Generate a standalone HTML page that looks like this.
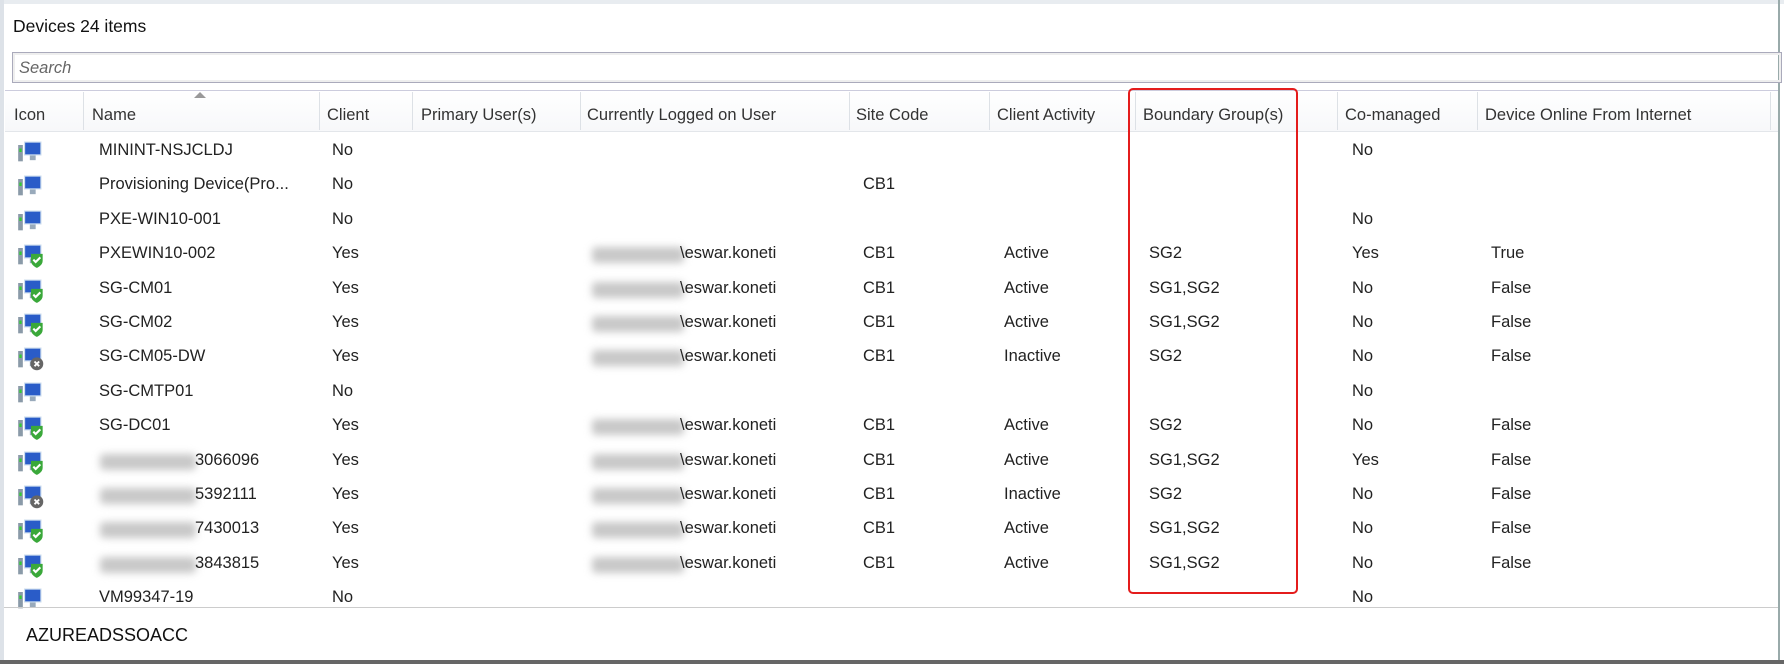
<!DOCTYPE html><html><head><style>
*{margin:0;padding:0;box-sizing:border-box}
body{width:1784px;height:664px;background:#fff;font-family:"Liberation Sans",sans-serif;color:#222;position:relative;overflow:hidden}
.a{position:absolute;white-space:nowrap}
.h{font-size:16.5px;color:#333;top:106px}
.r{font-size:16.5px;color:#222}
.div{position:absolute;top:92px;width:1px;height:38px;background:#dde1e6}
.blur{position:absolute;height:16px;background:#c8c8c8;filter:blur(4px);border-radius:4px}
</style></head><body>
<div class="a" style="left:0;top:0;width:1784px;height:4px;background:#e8ecf0"></div>
<div class="a" style="left:0;top:0;width:4px;height:664px;background:#dde2e8"></div>
<div class="a" style="left:1778px;top:0;width:2px;height:664px;background:#9aa"></div>
<div class="a" style="left:0;top:660px;width:1784px;height:4px;background:#666"></div>
<div class="a" style="left:13px;top:16px;font-size:17.5px;color:#111">Devices 24 items</div>
<div class="a" style="left:12px;top:52px;width:1770px;height:31px;border:1px solid #aab;box-shadow:inset 0 0 0 2px #eee"></div>
<div class="a" style="left:19px;top:59px;font-size:16.5px;font-style:italic;color:#666">Search</div>
<div class="a" style="left:5px;top:90px;width:1773px;height:42px;background:linear-gradient(#fff,#f7f8fa);border-top:1px solid #ccd;border-bottom:1px solid #e3e6ea"></div>
<div class="a" style="left:194px;top:92px;width:0;height:0;border-left:6px solid transparent;border-right:6px solid transparent;border-bottom:6px solid #999"></div>
<div class="div" style="left:83px"></div><div class="div" style="left:319px"></div><div class="div" style="left:412px"></div><div class="div" style="left:580px"></div><div class="div" style="left:849px"></div><div class="div" style="left:989px"></div><div class="div" style="left:1135px"></div><div class="div" style="left:1337px"></div><div class="div" style="left:1477px"></div><div class="div" style="left:1770px"></div>
<div class="a h" style="left:14px">Icon</div><div class="a h" style="left:92px">Name</div><div class="a h" style="left:327px">Client</div><div class="a h" style="left:421px">Primary User(s)</div><div class="a h" style="left:587px">Currently Logged on User</div><div class="a h" style="left:856px">Site Code</div><div class="a h" style="left:997px">Client Activity</div><div class="a h" style="left:1143px">Boundary Group(s)</div><div class="a h" style="left:1345px">Co-managed</div><div class="a h" style="left:1485px">Device Online From Internet</div>
<div id="rows"></div>
<div class="a" style="left:4px;top:607px;width:1774px;height:1px;background:#ccc"></div>
<div class="a" style="left:26px;top:625px;font-size:18px;color:#111">AZUREADSSOACC</div>
<div class="a" style="left:1128px;top:88px;width:170px;height:506px;border:2px solid #e41c1c;border-radius:5px"></div>
<script>
var d=[["MININT-NSJCLDJ","No","","","","","No","",0],["Provisioning Device(Pro...","No","","CB1","","","","",0],["PXE-WIN10-001","No","","","","","No","",0],["PXEWIN10-002","Yes","u","CB1","Active","SG2","Yes","True",1],["SG-CM01","Yes","u","CB1","Active","SG1,SG2","No","False",1],["SG-CM02","Yes","u","CB1","Active","SG1,SG2","No","False",1],["SG-CM05-DW","Yes","u","CB1","Inactive","SG2","No","False",2],["SG-CMTP01","No","","","","","No","",0],["SG-DC01","Yes","u","CB1","Active","SG2","No","False",1],["*3066096","Yes","u","CB1","Active","SG1,SG2","Yes","False",1],["*5392111","Yes","u","CB1","Inactive","SG2","No","False",2],["*7430013","Yes","u","CB1","Active","SG1,SG2","No","False",1],["*3843815","Yes","u","CB1","Active","SG1,SG2","No","False",1],["VM99347-19","No","","","","","No","",0]];
var h="";d.forEach(function(r,i){var t=141+i*34.4;
var ic='<svg class="a" style="left:17px;top:'+(t-3)+'px" width="28" height="28" viewBox="0 0 24 24"><rect x="1" y="6" width="4" height="14" fill="#8a9aa8"/><rect x="2" y="9" width="2" height="3" fill="#3c3"/><rect x="6" y="3" width="15" height="12" fill="#cde"/><rect x="7" y="4" width="13" height="10" fill="#2a5cc8"/><rect x="11" y="15" width="5" height="4" fill="#9ab"/>'+(r[8]==1?'<path d="M12 11h10v6c0 4-5 6-5 6s-5-2-5-6z" fill="#3aa83a"/><path d="M14 16l2 2 4-4" stroke="#fff" stroke-width="1.8" fill="none"/>':r[8]==2?'<circle cx="17" cy="17" r="5.5" fill="#666"/><path d="M15 15l4 4M19 15l-4 4" stroke="#fff" stroke-width="1.6"/>':'')+'</svg>';
h+=ic;var n=r[0];if(n[0]=="*"){h+='<div class="blur" style="left:100px;top:'+(t+3)+'px;width:96px"></div>';h+='<div class="a r" style="left:195px;top:'+t+'px">'+n.slice(1)+'</div>'}else h+='<div class="a r" style="left:99px;top:'+t+'px">'+n+'</div>';
h+='<div class="a r" style="left:332px;top:'+t+'px">'+r[1]+'</div>';
if(r[2]){h+='<div class="blur" style="left:592px;top:'+(t+3)+'px;width:92px"></div><div class="a r" style="left:680px;top:'+t+'px">\\eswar.koneti</div>'}
h+='<div class="a r" style="left:863px;top:'+t+'px">'+r[3]+'</div><div class="a r" style="left:1004px;top:'+t+'px">'+r[4]+'</div><div class="a r" style="left:1149px;top:'+t+'px">'+r[5]+'</div><div class="a r" style="left:1352px;top:'+t+'px">'+r[6]+'</div><div class="a r" style="left:1491px;top:'+t+'px">'+r[7]+'</div>';});
document.getElementById("rows").innerHTML=h;
</script>
</body></html>
